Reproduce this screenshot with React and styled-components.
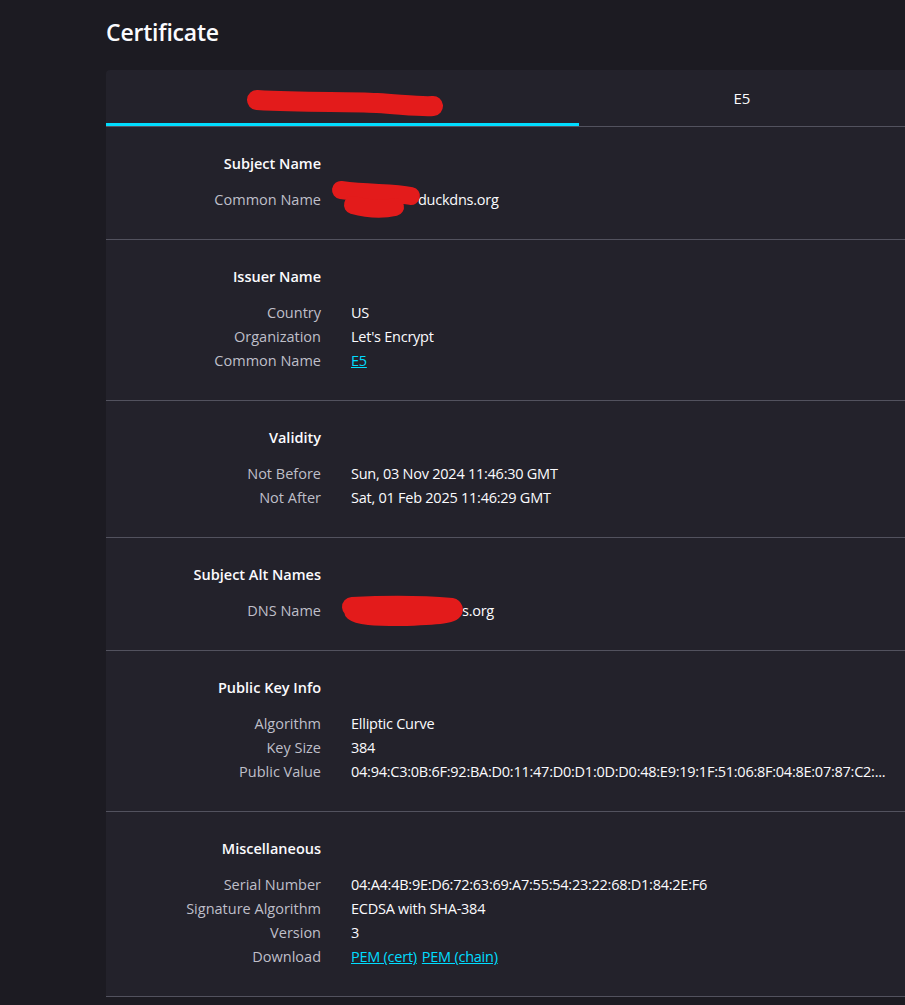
import React from "react";
import styled, { createGlobalStyle } from "styled-components";

const GlobalStyle = createGlobalStyle`
  html, body {
    margin: 0;
    padding: 0;
    background: #1c1b22;
    overflow: hidden;
  }
  body {
    font-family: "Open Sans", "Noto Sans", sans-serif;
    color: #fbfbfe;
  }
`;

const sections = [
  {
    title: "Subject Name",
    rows: [{ label: "Common Name", redact: { w: 67, kind: "cn" }, value: "duckdns.org" }],
  },
  {
    title: "Issuer Name",
    rows: [
      { label: "Country", value: "US" },
      { label: "Organization", value: "Let's Encrypt" },
      { label: "Common Name", links: ["E5"] },
    ],
  },
  {
    title: "Validity",
    rows: [
      { label: "Not Before", value: "Sun, 03 Nov 2024 11:46:30 GMT" },
      { label: "Not After", value: "Sat, 01 Feb 2025 11:46:29 GMT" },
    ],
  },
  {
    title: "Subject Alt Names",
    rows: [{ label: "DNS Name", redact: { w: 111, kind: "dns" }, value: "s.org" }],
  },
  {
    title: "Public Key Info",
    rows: [
      { label: "Algorithm", value: "Elliptic Curve" },
      { label: "Key Size", value: "384" },
      {
        label: "Public Value",
        value: "04:94:C3:0B:6F:92:BA:D0:11:47:D0:D1:0D:D0:48:E9:19:1F:51:06:8F:04:8E:07:87:C2:...",
      },
    ],
  },
  {
    title: "Miscellaneous",
    rows: [
      { label: "Serial Number", value: "04:A4:4B:9E:D6:72:63:69:A7:55:54:23:22:68:D1:84:2E:F6" },
      { label: "Signature Algorithm", value: "ECDSA with SHA-384" },
      { label: "Version", value: "3" },
      { label: "Download", links: ["PEM (cert)", "PEM (chain)"] },
    ],
  },
];

// scribbles that hide the host name in the screenshot
function Blob({ kind }) {
  if (kind === "tab") {
    return (
      <BlobSvg width="200" height="30" style={{ left: -6, top: -4 }}>
        <path
          d="M10 13 C 60 16, 100 14, 130 16 S 175 20, 186 19"
          stroke="#e31b1b"
          strokeWidth="20"
          strokeLinecap="round"
          fill="none"
        />
      </BlobSvg>
    );
  }
  if (kind === "cn") {
    return (
      <BlobSvg width="100" height="40" style={{ left: -20, top: -16 }}>
        <path d="M10 12 C 40 16, 60 14, 80 18" stroke="#e31b1b" strokeWidth="18" strokeLinecap="round" fill="none" />
        <path d="M22 27 C 40 32, 55 31, 64 29" stroke="#e31b1b" strokeWidth="18" strokeLinecap="round" fill="none" />
      </BlobSvg>
    );
  }
  return (
    <BlobSvg width="140" height="36" style={{ left: -12, top: -14 }}>
      <path d="M13 16 C 50 14, 80 14, 113 17 C 118 22, 100 24, 60 25 C 35 25, 20 24, 15 20" stroke="#e31b1b" strokeWidth="20" strokeLinecap="round" strokeLinejoin="round" fill="#e31b1b" />
    </BlobSvg>
  );
}

export default function App() {
  return (
    <>
      <GlobalStyle />
      <Page>
        <Title>Certificate</Title>
        <Card>
          <Tabs>
            <Tab $active $width="473px">
              <Redact $w={180}>
                <Blob kind="tab" />
              </Redact>
            </Tab>
            <Tab>E5</Tab>
          </Tabs>
          {sections.map((s) => (
            <Section key={s.title}>
              <Header>
                <HeaderLabel>{s.title}</HeaderLabel>
              </Header>
              {s.rows.map((r) => (
                <Row key={r.label}>
                  <Label>{r.label}</Label>
                  <Value>
                    {r.redact && (
                      <Redact $w={r.redact.w}>
                        <Blob kind={r.redact.kind} />
                      </Redact>
                    )}
                    {r.value}
                    {r.links &&
                      r.links.map((l) => (
                        <Link key={l} href="#">
                          {l}
                        </Link>
                      ))}
                  </Value>
                </Row>
              ))}
            </Section>
          ))}
        </Card>
      </Page>
    </>
  );
}

const Page = styled.div`
  padding: 13px 0 0 106px;
  min-height: 1005px;
  box-sizing: border-box;
`;

const Title = styled.h1`
  margin: 0;
  font-size: 23px;
  line-height: 38px;
  font-weight: 600;
  color: #fbfbfe;
  letter-spacing: -0.2px;
`;

const Card = styled.div`
  margin-top: 19px;
  background: #23222b;
  border-radius: 4px 0 0 0;
`;

const Tabs = styled.div`
  display: flex;
  height: 57px;
  border-bottom: 1px solid #52525e;
  box-sizing: border-box;
`;

const Tab = styled.div`
  flex: ${(p) => (p.$width ? `0 0 ${p.$width}` : "1")};
  display: flex;
  align-items: center;
  justify-content: center;
  font-size: 15px;
  color: #fbfbfe;
  box-sizing: border-box;
  border-bottom: 3px solid ${(p) => (p.$active ? "#00ddff" : "transparent")};
  padding-top: 3px;
`;

const Section = styled.div`
  padding: 27px 0 27px 0;
  border-bottom: 1px solid #52525e;
`;

const Header = styled.div`
  display: grid;
  grid-template-columns: 215px 1fr;
  margin-bottom: 14px;
`;

const HeaderLabel = styled.div`
  text-align: right;
  font-size: 14.5px;
  line-height: 20px;
  font-weight: 600;
  color: #fbfbfe;
`;

const Row = styled.div`
  display: grid;
  grid-template-columns: 215px 1fr;
  column-gap: 30px;
  font-size: 14.5px;
  line-height: 24px;
`;

const Label = styled.div`
  text-align: right;
  color: #bfbfc9;
  white-space: nowrap;
`;

const Value = styled.div`
  color: #fbfbfe;
  white-space: nowrap;
  letter-spacing: -0.25px;
`;

const Link = styled.a`
  color: #00ddff;
  text-decoration: underline;
  margin-right: 5px;
`;

const Redact = styled.span`
  position: relative;
  display: inline-block;
  width: ${(p) => p.$w}px;
  height: 1em;
  vertical-align: middle;
`;

const BlobSvg = styled.svg`
  position: absolute;
  overflow: visible;
`;
